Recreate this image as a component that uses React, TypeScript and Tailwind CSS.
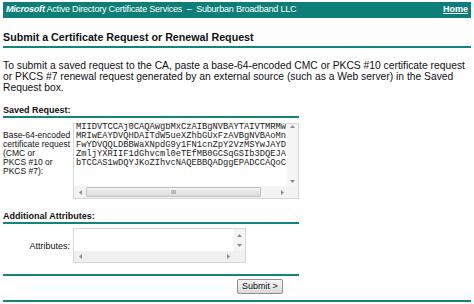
import React from "react";

const REQUEST_LINES = [
  "MIIDVTCCAj0CAQAwgbMxCzAIBgNVBAYTAIVTMRMw",
  "MRIwEAYDVQHDAITdW5ueXZhbGUxFzAVBgNVBAoMn",
  "FwYDVQQLDBBWaXNpdG9y1FN1cnZpY2VzMSYwJAYD",
  "ZmljYXRIIF1dGhvcml0eTEfMB0GCSqGSIb3DQEJA",
  "bTCCAS1wDQYJKoZIhvcNAQEBBQADggEPADCCAQoC",
];

const INTRO_LINES = [
  "To submit a saved request to the CA, paste a base-64-encoded CMC or PKCS #10 certificate request",
  "or PKCS #7 renewal request generated by an external source (such as a Web server) in the Saved",
  "Request box.",
];

const LABEL_LINES = ["Base-64-encoded", "certificate request", "(CMC or", "PKCS #10 or", "PKCS #7):"];

function Arrow({ dir }: { dir: "up" | "down" | "left" | "right" }) {
  const pts = {
    up: "0,3 2.5,0 5,3",
    down: "0,0 2.5,3 5,0",
    left: "3,0 0,2.5 3,5",
    right: "0,0 3,2.5 0,5",
  }[dir];
  const vert = dir === "up" || dir === "down";
  return (
    <svg width={vert ? 5 : 3} height={vert ? 3 : 5} viewBox={vert ? "0 0 5 3" : "0 0 3 5"}>
      <polygon points={pts} fill="#8c8c8c" />
    </svg>
  );
}

function SectionTitle({ children }: { children: React.ReactNode }) {
  return (
    <div className="w-[296px] border-b-2 border-[#12857c] text-[9px] font-bold leading-[11px] text-[#111]">
      {children}
    </div>
  );
}

export default function App() {
  return (
    <div className="h-[304px] w-[474px] overflow-hidden bg-white px-[3px] pt-[2px] font-['Liberation_Sans',Arial,sans-serif] text-[#111]">
      <div className="flex h-[16px] items-center justify-between bg-[#0e7f78] px-[3px] text-[9px] tracking-[-0.2px] text-white">
        <span>
          <span className="font-bold italic">Microsoft</span> Active Directory Certificate Services&nbsp; –&nbsp; Suburban Broadband LLC
        </span>
        <span className="font-bold tracking-normal underline">Home</span>
      </div>

      <h1 className="mt-[13px] border-b-2 border-[#12857c] pb-[2px] text-[10.7px] font-bold leading-[13px]">
        Submit a Certificate Request or Renewal Request
      </h1>

      <p className="mt-[12px] whitespace-nowrap text-[10.3px] leading-[11px]">
        {INTRO_LINES.map((l) => (
          <span key={l} className="block">
            {l}
          </span>
        ))}
      </p>

      <div className="mt-[12px]">
        <SectionTitle>Saved Request:</SectionTitle>
        <div className="mt-[5px] flex">
          <div className="w-[70px] whitespace-nowrap pt-[8px] text-[8.5px] leading-[9px]">
            {LABEL_LINES.map((l) => (
              <span key={l} className="block">
                {l}
              </span>
            ))}
          </div>
          <div className="flex h-[76px] w-[226px] flex-col border border-[#d6d6d6]">
            <div className="flex min-h-0 flex-1">
              <div className="-mt-[1px] flex-1 overflow-hidden pl-[2px] font-['Liberation_Mono','Courier_New',monospace] text-[8.75px] leading-[9px] whitespace-pre text-[#222]">
                {REQUEST_LINES.map((l) => (
                  <div key={l}>{l}</div>
                ))}
              </div>
              <div className="flex w-[11px] flex-col items-center justify-between bg-[#f5f5f5] pb-[3px] pt-[1px]">
                <Arrow dir="up" />
                <Arrow dir="down" />
              </div>
            </div>
            <div className="flex h-[12px] items-center bg-[#f3f3f3]">
              <div className="flex w-[12px] justify-center">
                <Arrow dir="left" />
              </div>
              <div className="flex h-[10px] w-[175px] items-center justify-center rounded-[1px] border border-[#c4c4c4] bg-gradient-to-b from-[#f2f2f2] to-[#dcdcdc] text-[6px] font-bold leading-none text-[#999]">
                III
              </div>
              <div className="flex flex-1 justify-start pl-[20px]">
                <Arrow dir="right" />
              </div>
            </div>
          </div>
        </div>
      </div>

      <div className="mt-[12px]">
        <SectionTitle>Additional Attributes:</SectionTitle>
        <div className="mt-[4px] flex">
          <div className="flex w-[70px] items-center justify-end pr-[3px] pt-[2px] text-[9px]">
            Attributes:
          </div>
          <div className="flex h-[35px] w-[173px] flex-col border border-[#d6d6d6]">
            <div className="flex flex-1">
              <div className="flex-1" />
              <div className="flex w-[12px] flex-col items-center justify-center gap-[7px] bg-[#f5f5f5]">
                <Arrow dir="up" />
                <Arrow dir="down" />
              </div>
            </div>
            <div className="flex h-[11px] items-center justify-between bg-[#f0f0f0] pl-[5px] pr-[15px]">
              <Arrow dir="left" />
              <Arrow dir="right" />
            </div>
          </div>
        </div>
      </div>

      <div className="mt-[11px] w-[296px] border-b-2 border-[#12857c]" />
      <div className="flex w-[296px] justify-end pr-[16px] pt-[3px]">
        <button className="h-[15px] w-[46px] rounded-[2px] border border-[#8f8f8f] bg-gradient-to-b from-[#f7f7f7] to-[#dadada] text-[9px] leading-none text-[#111]">
          Submit &gt;
        </button>
      </div>
      <div className="mt-[6px] border-b-2 border-[#12857c]" />
    </div>
  );
}
